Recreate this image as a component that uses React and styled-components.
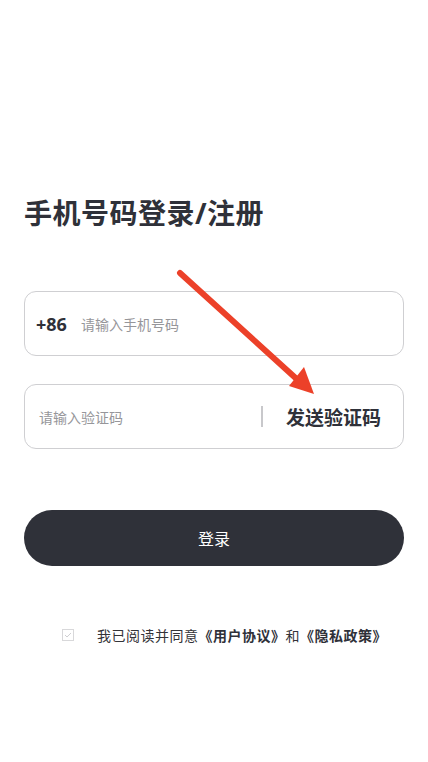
import styled, { createGlobalStyle } from 'styled-components';

const GlobalStyle = createGlobalStyle`
  html, body {
    margin: 0;
    padding: 0;
    background: #ffffff;
  }
  body {
    font-family: "Noto Sans", "Noto Sans CJK SC", sans-serif;
    color: #2f3139;
  }
  * { box-sizing: border-box; }
`;

const Page = styled.div`
  position: relative;
  width: 428px;
  height: 762px;
  overflow: hidden;
  padding: 193px 24px 0;
  display: flex;
  flex-direction: column;
`;

const Title = styled.h1`
  margin: 0;
  font-size: 28px;
  line-height: 40px;
  font-weight: 700;
  color: #2f3139;
  letter-spacing: 0.5px;
`;

const Form = styled.div`
  margin-top: 58px;
  display: flex;
  flex-direction: column;
  gap: 28px;
`;

const Field = styled.div`
  height: 65px;
  border: 1px solid #cfcfd2;
  border-radius: 12px;
  display: flex;
  align-items: center;
  padding: 0 ${({ right }) => right || 0}px 0 ${({ left }) => left}px;
`;

const Prefix = styled.span`
  font-size: 18px;
  font-weight: 700;
  color: #2f3139;
  margin-right: 14px;
`;

const Placeholder = styled.span`
  font-size: 14px;
  color: #96969a;
  flex: 1;
`;

const Divider = styled.span`
  width: 2px;
  height: 21px;
  background: #c8c8cb;
  margin-right: 23px;
`;

const SendCode = styled.span`
  font-size: 19px;
  font-weight: 700;
  color: #2f3139;
`;

const LoginButton = styled.button`
  margin-top: 61px;
  height: 56px;
  border: none;
  border-radius: 28px;
  background: #2f3139;
  color: #ffffff;
  font-family: "Noto Sans CJK SC", sans-serif;
  font-size: 16px;
  cursor: pointer;
`;

const Agreement = styled.div`
  margin-top: 59px;
  display: flex;
  align-items: center;
  padding-left: 38px;
  font-size: 14px;
  letter-spacing: 0.5px;
  color: #333338;
`;

const Check = styled.span`
  width: 12px;
  height: 12px;
  border: 1px solid #d8d8da;
  margin-right: 23px;
  display: flex;
  align-items: center;
  justify-content: center;
`;

const Link = styled.b`
  font-weight: 700;
  color: #2f3139;
`;

const ArrowLayer = styled.svg`
  position: absolute;
  left: 0;
  top: 0;
  pointer-events: none;
`;

export default function App() {
  return (
    <>
      <GlobalStyle />
      <Page>
        <Title>手机号码登录/注册</Title>
        <Form>
          <Field left={11}>
            <Prefix>+86</Prefix>
            <Placeholder>请输入手机号码</Placeholder>
          </Field>
          <Field left={14} right={22}>
            <Placeholder>请输入验证码</Placeholder>
            <Divider />
            <SendCode>发送验证码</SendCode>
          </Field>
        </Form>
        <LoginButton>登录</LoginButton>
        <Agreement>
          <Check>
            <svg width="8" height="6" viewBox="0 0 8 6">
              <path d="M1 3 L3 5 L7 1" fill="none" stroke="#cfcfd2" strokeWidth="1" />
            </svg>
          </Check>
          <span>
            我已阅读并同意<Link>《用户协议》</Link>和<Link>《隐私政策》</Link>
          </span>
        </Agreement>
        <ArrowLayer width="428" height="762" viewBox="0 0 428 762">
          <line x1="180" y1="273" x2="300" y2="382" stroke="#ec4129" strokeWidth="6" strokeLinecap="round" />
          <polygon points="304,367 289,386 314,394" fill="#ec4129" />
        </ArrowLayer>
      </Page>
    </>
  );
}
